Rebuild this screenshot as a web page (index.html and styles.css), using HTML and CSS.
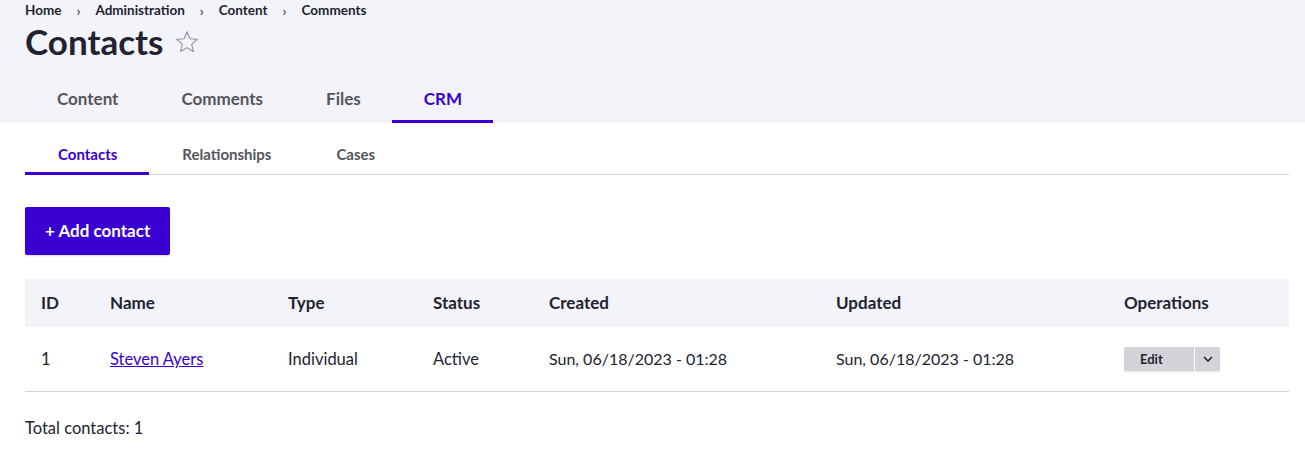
FILE: index.html
```html
<!DOCTYPE html>
<html lang="en">
<head>
<meta charset="utf-8">
<title>Contacts</title>
<link rel="stylesheet" href="styles.css">
</head>
<body>
<header class="page-header">
  <nav class="breadcrumb">
    <a href="#">Home</a><span class="sep">›</span>
    <a href="#">Administration</a><span class="sep">›</span>
    <a href="#">Content</a><span class="sep">›</span>
    <a href="#">Comments</a>
  </nav>
  <div class="title-row">
    <h1 class="page-title">Contacts</h1>
    <svg class="star" width="24" height="24" viewBox="0 0 24 24" aria-hidden="true">
      <path d="M12 1.8l2.9 6.9 7.4.6-5.6 4.9 1.7 7.3L12 17.6l-6.4 3.9 1.7-7.3L1.7 9.3l7.4-.6z" fill="none" stroke="#8e929c" stroke-width="1.1" stroke-linejoin="round"/>
    </svg>
  </div>
  <ul class="tabs-primary">
    <li><a href="#">Content</a></li>
    <li><a href="#">Comments</a></li>
    <li><a href="#">Files</a></li>
    <li class="active"><a href="#">CRM</a></li>
  </ul>
</header>
<main class="content">
  <ul class="tabs-secondary">
    <li class="active"><a href="#">Contacts</a></li>
    <li><a href="#">Relationships</a></li>
    <li><a href="#">Cases</a></li>
  </ul>
  <a class="button-primary" href="#">+ Add contact</a>
  <table class="data-table">
    <thead>
      <tr>
        <th class="c-id">ID</th>
        <th class="c-name">Name</th>
        <th class="c-type">Type</th>
        <th class="c-status">Status</th>
        <th class="c-created">Created</th>
        <th class="c-updated">Updated</th>
        <th class="c-ops">Operations</th>
      </tr>
    </thead>
    <tbody>
      <tr>
        <td>1</td>
        <td><a class="link" href="#">Steven Ayers</a></td>
        <td>Individual</td>
        <td>Active</td>
        <td class="date">Sun, 06/18/2023 - 01:28</td>
        <td class="date">Sun, 06/18/2023 - 01:28</td>
        <td>
          <div class="dropbutton">
            <a class="drop-main" href="#">Edit</a>
            <span class="drop-toggle">
              <svg width="10" height="6" viewBox="0 0 10 6" aria-hidden="true"><path d="M1 1l4 4 4-4" fill="none" stroke="#222330" stroke-width="1.6"/></svg>
            </span>
          </div>
        </td>
      </tr>
    </tbody>
  </table>
  <p class="total">Total contacts: 1</p>
</main>
</body>
</html>
```
FILE: styles.css
```css
* { box-sizing: border-box; }
body {
  margin: 0;
  font-family: Lato, "Noto Sans", "DejaVu Sans", sans-serif;
  color: #222330;
  background: #fff;
}
a { text-decoration: none; color: inherit; }
ul { list-style: none; margin: 0; padding: 0; }

.page-header {
  background: #f3f4f9;
  padding: 0 25px;
}
.breadcrumb {
  display: flex;
  align-items: center;
  height: 20px;
  font-size: 13.5px;
  font-weight: 700;
}
.breadcrumb .sep {
  margin: 0 15px;
  font-weight: 400;
  font-size: 14px;
}
.title-row {
  display: flex;
  align-items: center;
  height: 44px;
}
.page-title {
  margin: 0;
  font-size: 35px;
  font-weight: 700;
  line-height: 42px;
  padding-bottom: 2px;
}
.star { margin-left: 12px; margin-top: 0; }

.tabs-primary {
  display: flex;
  margin-top: 11px;
}
.tabs-primary li a {
  display: block;
  height: 48px;
  line-height: 47px;
  padding: 0 31px 0 32px;
  font-size: 17px;
  font-weight: 700;
  color: #55565b;
  border-bottom: 3px solid transparent;
}
.tabs-primary li.active a {
  color: #3a00d3;
  border-bottom-color: #3a00d3;
}

.content { padding: 0 16px 0 25px; }
.tabs-secondary {
  display: flex;
  margin-top: 13px;
  border-bottom: 1px solid #d3d4d9;
}
.tabs-secondary li a {
  display: block;
  height: 39px;
  line-height: 36px;
  padding: 0 32px 0 33px;
  font-size: 15px;
  font-weight: 700;
  color: #55565b;
  border-bottom: 3px solid transparent;
  margin-bottom: -1px;
}
.tabs-secondary li.active a {
  color: #3a00d3;
  border-bottom-color: #3a00d3;
}

.button-primary {
  display: inline-block;
  margin-top: 32px;
  height: 48px;
  line-height: 47px;
  padding: 0 20px;
  background: #3a00d3;
  color: #fff;
  font-size: 17px;
  font-weight: 700;
  border-radius: 2px;
  box-shadow: 0 1px 2px rgba(0,0,0,0.15);
}

.data-table {
  width: 100%;
  border-collapse: collapse;
  margin-top: 24px;
  font-size: 16.5px;
}
.data-table th {
  background: #f3f4f9;
  height: 48px;
  text-align: left;
  font-weight: 700;
  font-size: 17px;
  padding: 0 16px 1px;
}
.data-table td {
  height: 64px;
  padding: 0 16px;
  border-bottom: 1px solid #d3d4d9;
}
.data-table td.date { font-size: 16px; }
.c-id { width: 69px; }
.c-name { width: 178px; }
.c-type { width: 145px; }
.c-status { width: 116px; }
.c-created { width: 287px; }
.c-updated { width: 288px; }
.link { color: #3a00d3; text-decoration: underline; }

.dropbutton {
  display: inline-flex;
  height: 24px;
  background: #d3d4d9;
  border-radius: 2px;
  box-shadow: 0 1px 2px rgba(0,0,0,0.1);
  vertical-align: middle;
}
.drop-main {
  width: 71px;
  line-height: 24px;
  padding-left: 16px;
  font-size: 13px;
  font-weight: 700;
  border-right: 1px solid #fff;
}
.drop-toggle {
  width: 25px;
  display: flex;
  align-items: center;
  justify-content: center;
}
.total {
  margin: 26px 0 0;
  font-size: 16.5px;
}
```
